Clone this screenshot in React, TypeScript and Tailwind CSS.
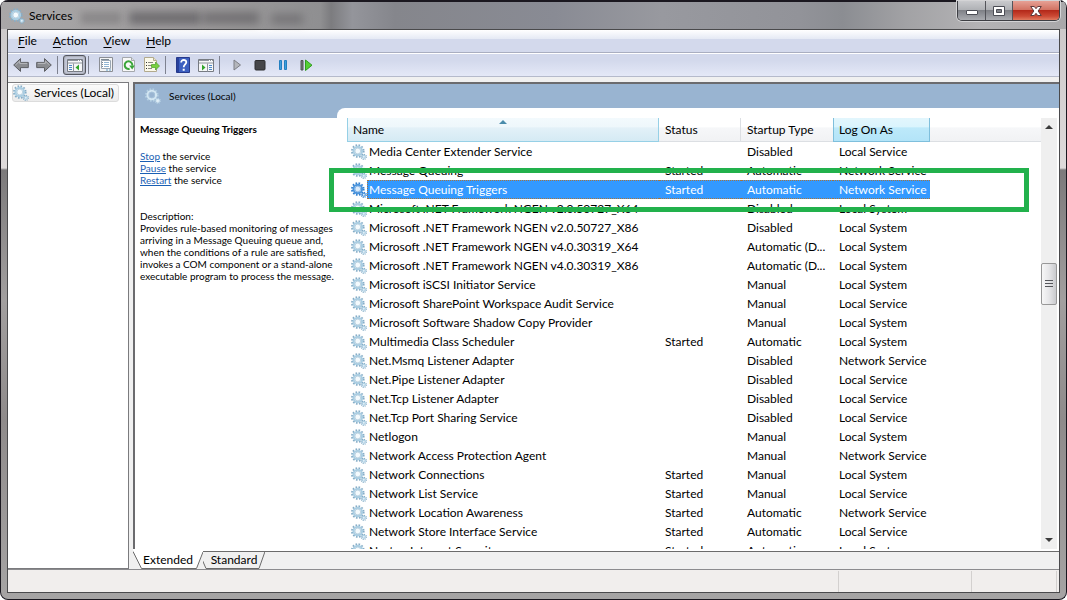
import type { ReactNode } from "react";

type Service = {
  name: string;
  status?: string;
  startup: string;
  logOn: string;
};

const services: Service[] = [
  { name: "Media Center Extender Service", startup: "Disabled", logOn: "Local Service" },
  { name: "Message Queuing", status: "Started", startup: "Automatic", logOn: "Network Service" },
  { name: "Message Queuing Triggers", status: "Started", startup: "Automatic", logOn: "Network Service" },
  { name: "Microsoft .NET Framework NGEN v2.0.50727_X64", startup: "Disabled", logOn: "Local System" },
  { name: "Microsoft .NET Framework NGEN v2.0.50727_X86", startup: "Disabled", logOn: "Local System" },
  { name: "Microsoft .NET Framework NGEN v4.0.30319_X64", startup: "Automatic (D...", logOn: "Local System" },
  { name: "Microsoft .NET Framework NGEN v4.0.30319_X86", startup: "Automatic (D...", logOn: "Local System" },
  { name: "Microsoft iSCSI Initiator Service", startup: "Manual", logOn: "Local System" },
  { name: "Microsoft SharePoint Workspace Audit Service", startup: "Manual", logOn: "Local Service" },
  { name: "Microsoft Software Shadow Copy Provider", startup: "Manual", logOn: "Local System" },
  { name: "Multimedia Class Scheduler", status: "Started", startup: "Automatic", logOn: "Local System" },
  { name: "Net.Msmq Listener Adapter", startup: "Disabled", logOn: "Network Service" },
  { name: "Net.Pipe Listener Adapter", startup: "Disabled", logOn: "Local Service" },
  { name: "Net.Tcp Listener Adapter", startup: "Disabled", logOn: "Local Service" },
  { name: "Net.Tcp Port Sharing Service", startup: "Disabled", logOn: "Local Service" },
  { name: "Netlogon", startup: "Manual", logOn: "Local System" },
  { name: "Network Access Protection Agent", startup: "Manual", logOn: "Network Service" },
  { name: "Network Connections", status: "Started", startup: "Manual", logOn: "Local System" },
  { name: "Network List Service", status: "Started", startup: "Manual", logOn: "Local Service" },
  { name: "Network Location Awareness", status: "Started", startup: "Automatic", logOn: "Network Service" },
  { name: "Network Store Interface Service", status: "Started", startup: "Automatic", logOn: "Local Service" },
  { name: "Norton Internet Security", status: "Started", startup: "Automatic", logOn: "Local System" }
];

const selectedName = "Message Queuing Triggers";

const menus = ["File", "Action", "View", "Help"];

function GearIcon({ active = false, pale = false }: { active?: boolean; pale?: boolean }) {
  const ring = active ? "#4a94dc" : pale ? "#d3e6f2" : "#a9cde2";
  const edge = active ? "#2f7fd0" : pale ? "#b5d0e3" : "#86adc7";
  return (
    <svg viewBox="0 0 16 16" className="h-4 w-4 shrink-0" aria-hidden="true">
      <circle cx="6.8" cy="7" r="5.8" fill="none" stroke={edge} strokeWidth="2" strokeDasharray="1.6 1.44" />
      <circle cx="6.8" cy="7" r="4.3" fill={pale ? "none" : "#f4fafd"} stroke={ring} strokeWidth="2" />
      <circle cx="6.8" cy="7" r="2.9" fill={active ? "#dcecfb" : "none"} stroke={edge} strokeWidth="0.5" />
      <circle cx="12.8" cy="12.8" r="2.5" fill="none" stroke={edge} strokeWidth="1.3" strokeDasharray="1 0.96" />
      <circle cx="12.8" cy="12.8" r="1.5" fill="#e4f0f7" stroke={ring} strokeWidth="1.1" />
    </svg>
  );
}

function ToolButton({ label, pressed = false, children }: { label: string; pressed?: boolean; children: ReactNode }) {
  return (
    <button
      type="button"
      aria-label={label}
      className={
        pressed
          ? "flex h-5 w-[23px] items-center justify-center rounded-[3px] border border-[#54565f] bg-[#c3c8d8] shadow-[inset_0_0_2px_#777]"
          : "flex h-5 w-[23px] items-center justify-center"
      }
    >
      <svg viewBox="0 0 16 16" className="h-4 w-4 shrink-0">
        {children}
      </svg>
    </button>
  );
}

function Separator() {
  return (
    <div className="w-2 pl-0.5">
      <div className="h-[18px] w-px bg-[#7e8290]" />
    </div>
  );
}

function TitleBar() {
  return (
    <header className="relative flex h-[29px] shrink-0 items-center border-t-2 border-[#1b1820] bg-[linear-gradient(90deg,#a9a7a8_0%,#9c9a9b_20%,#8f8f91_30%,#7c7c7f_31%,#94959b_33%,#85868c_37%,#898b94_52%,#98999f_62%,#929399_75%,#8b8d92_79%,#a2a2a5_85%,#b4b3b5_92%,#a9a8aa_100%)] pl-2">
      <div className="absolute top-2.5 left-20 h-3 w-10 bg-[#69676a]/40 blur-[3px]" />
      <div className="absolute top-2.5 left-32 h-3 w-18 bg-[#4d4b50]/60 blur-[4px]" />
      <div className="absolute top-2.5 left-[202px] h-3 w-14 bg-[#4d4b50]/50 blur-[4px]" />
      <div className="absolute top-3 left-[270px] h-2.5 w-8 bg-[#5a585c]/50 blur-[4px]" />
      <GearIcon />
      <h1 className="relative ml-1 text-xs leading-4">Services</h1>
      <div className="absolute -top-px right-1.5 flex h-5 overflow-hidden rounded-b-[5px] border border-t-0 border-[#3d3e43] shadow-[0_0_0_1px_#d4d4d6]">
        <button type="button" aria-label="Minimize" className="flex w-7 items-center justify-center border-r border-[#53545a] bg-[linear-gradient(#c9cacd_0%,#aeb0b4_48%,#7f8187_50%,#a9abb0_100%)]">
          <svg viewBox="0 0 14 12" className="h-3 w-3.5">
            <rect x="1.5" y="5.5" width="11" height="4" rx="0.5" fill="#fff" stroke="#4b4d55" />
          </svg>
        </button>
        <button type="button" aria-label="Maximize" className="flex w-[27px] items-center justify-center border-r border-[#53545a] bg-[linear-gradient(#c9cacd_0%,#aeb0b4_48%,#7f8187_50%,#a9abb0_100%)]">
          <svg viewBox="0 0 14 12" className="h-3 w-3.5">
            <path d="M1.5 1.5h11v9h-11zM4.500 4.500v3h5v-3z" fill="#fff" fillRule="evenodd" stroke="#4b4d55" />
          </svg>
        </button>
        <button type="button" aria-label="Close" className="flex w-[46px] items-center justify-center bg-[linear-gradient(#e6a195_0%,#d27363_46%,#b4291a_50%,#cc4a35_80%,#e07a5f_100%)]">
          <svg viewBox="0 0 14 12" className="h-3 w-3.5">
            <path d="M1.7 1.5h3.6L7 3.7l1.7-2.2h3.6L9.1 6l3.2 4.5H8.7L7 8.3l-1.7 2.2H1.7L4.9 6z" fill="#fff" stroke="#5d3a3c" />
          </svg>
        </button>
      </div>
    </header>
  );
}

function MenuBar() {
  return (
    <nav className="flex h-[23px] shrink-0 items-center border-b border-[#a9aec0] bg-[linear-gradient(#ffffff_0%,#e6eaf5_39%,#d3d9ec_40%,#d3d9ec_100%)] pl-0.5">
      {menus.map((menu) => (
        <button key={menu} type="button" className="px-2 text-xs leading-4">
          <span className="underline underline-offset-2">{menu[0]}</span>
          {menu.slice(1)}
        </button>
      ))}
    </nav>
  );
}

function Toolbar() {
  return (
    <div className="flex h-6 shrink-0 items-center border-t border-b border-t-white border-b-[#b5bacb] bg-[linear-gradient(#d3d9ec_0%,#d3d9ec_30%,#e4e8f7_100%)] pl-px">
      <ToolButton label="Back">
        <path d="M.7 8 7.5 1.6v3.8h7.8v5.2H7.5v3.8z" fill="#8b8d91" stroke="#5c5e63" />
        <path d="M2.5 8 6.7 4v2.4h7.5" fill="none" stroke="#b8babf" />
      </ToolButton>
      <ToolButton label="Forward">
        <path d="M15.3 8 8.5 1.6v3.8H.7v5.2h7.8v3.8z" fill="#8b8d91" stroke="#5c5e63" />
        <path d="M1.8 6.4h7.5V4l4.2 4" fill="none" stroke="#b8babf" />
      </ToolButton>
      <Separator />
      <ToolButton label="Show/Hide Console Tree" pressed>
        <path d="M.5 2.5h15v12H.5z" fill="#f6f7f8" stroke="#777b82" />
        <path d="M1 3.5h14M1 6h14" stroke="#8f959e" />
        <path d="M11 3.5h1M13 3.5h1" stroke="#fff" />
        <path d="M6.5 6.5v8" stroke="#8f959e" />
        <path d="M2 8.5h3M2 10.5h3M2 12.5h3" stroke="#4e89c8" />
        <path d="M12 7.5v6L8.5 10.5z" fill="#32a52c" />
      </ToolButton>
      <Separator />
      <ToolButton label="Properties">
        <path d="M1.5.5h13v14h-13z" fill="#f3f4f5" stroke="#8b8e94" />
        <path d="M3.5 3.5h9v8h-9z" fill="#fff" stroke="#9aa6b3" />
        <path d="M3 2.5h8M4 5.5h1M4 7.5h1M4 9.5h1" stroke="#7d8994" />
        <path d="M6 5.5h5M6 7.5h5M6 9.5h5" stroke="#90b5d3" />
        <path d="M8 13h2M11 13h2" stroke="#5d9dcb" />
      </ToolButton>
      <ToolButton label="Refresh">
        <path d="M1.5.5h9l3 3v11h-12z" fill="#f8f8f8" stroke="#a5a8ac" />
        <path d="M10.5.5v3h3" fill="#dfe1e4" stroke="#a5a8ac" />
        <path d="M8.600 11.800A3.800 3.800 0 1 1 11.300 8.600" fill="none" stroke="#3aa53a" strokeWidth="2" />
        <path d="M8.200 8.400h5.600L11.200 12.400z" fill="#3aa53a" />
      </ToolButton>
      <ToolButton label="Export List">
        <path d="M.5.5h9l3 3v11H.5z" fill="#fbf9ea" stroke="#b2aa8d" />
        <path d="M9.5.5v3h3" fill="#e9e5cd" stroke="#b2aa8d" />
        <path d="M2 5.5h1M2 8.5h1M2 11.5h1" stroke="#333" />
        <path d="M4 5.5h5M4 8.5h4M4 11.5h4" stroke="#8b8a80" />
        <path d="M7.5 7.5h4V5l4 4-4 4v-2.5h-4z" fill="#79d03f" stroke="#4aa02a" strokeWidth="0.7" />
      </ToolButton>
      <Separator />
      <ToolButton label="Help">
        <path d="M1.5.5h13v15h-13z" fill="#3c5fc0" stroke="#26398b" />
        <path d="M2 1h2v14H2z" fill="#27419c" />
        <path d="M6.2 5.5C6 2.2 11.4 2.2 11.3 5.3c0 2-2.6 2.2-2.6 4.9" fill="none" stroke="#fff" strokeWidth="1.8" />
        <path d="M7.7 11.7h2v2h-2z" fill="#fff" />
      </ToolButton>
      <ToolButton label="Show/Hide Action Pane">
        <path d="M.5 2.5h15v12H.5z" fill="#f6f7f8" stroke="#777b82" />
        <path d="M1 3.5h14M1 6h14" stroke="#8f959e" />
        <path d="M11 3.5h1M13 3.5h1" stroke="#fff" />
        <path d="M9.5 6.5v8" stroke="#8f959e" />
        <path d="M11 8.5h3M11 10.5h3M11 12.5h3" stroke="#4e89c8" />
        <path d="M4 7.5v6l3.5-3z" fill="#32a52c" />
      </ToolButton>
      <Separator />
      <ToolButton label="Start Service">
        <path d="M5 3v10l6.500-5z" fill="#b4b6bb" stroke="#7d7f86" />
      </ToolButton>
      <ToolButton label="Stop Service">
        <rect x="3" y="3.5" width="10" height="9.5" rx="1" fill="#46474a" stroke="#2d2e30" />
      </ToolButton>
      <ToolButton label="Pause Service">
        <path d="M4.500 3.500h2v9h-2zM9.500 3.500h2v9h-2z" fill="#3c9fdc" stroke="#237fc0" />
      </ToolButton>
      <ToolButton label="Restart Service">
        <path d="M3 3.5h2v9.5H3z" fill="#77797d" stroke="#505256" />
        <path d="M7.5 3v10.500L14 8.200z" fill="#55cf35" stroke="#2f9b20" />
      </ToolButton>
    </div>
  );
}

function DetailPane() {
  return (
    <section className="w-[202px] shrink-0 pt-[5px] pl-[5px] text-[10px] leading-3 whitespace-nowrap">
      <h2 className="font-bold">{selectedName}</h2>
      <ul className="mt-[15px]">
        {["Stop", "Pause", "Restart"].map((action) => (
          <li key={action}>
            <a href="#" className="text-[#1a5fb4] underline">
              {action}
            </a>{" "}
            the service
          </li>
        ))}
      </ul>
      <p className="mt-6">
        Description:
        <br />
        Provides rule-based monitoring of messages
        <br />
        arriving in a Message Queuing queue and,
        <br />
        when the conditions of a rule are satisfied,
        <br />
        invokes a COM component or a stand-alone
        <br />
        executable program to process the message.
      </p>
    </section>
  );
}

function ServiceRow({ service }: { service: Service }) {
  const selected = service.name === selectedName;
  const cell = selected
    ? "border-y border-dotted border-[#a8743c] bg-[#3399ff] p-0 pl-1.5 text-white"
    : "p-0 pl-1.5";
  return (
    <tr className="h-[19px]" aria-selected={selected}>
      <td className="p-0">
        <div className="flex h-[19px] items-center pl-1">
          <GearIcon active={selected} />
          <span
            className={
              selected
                ? "flex h-[19px] flex-1 items-center border-y border-l border-dotted border-[#a8743c] bg-[#3399ff] pl-px text-white"
                : "pl-0.5"
            }
          >
            {service.name}
          </span>
        </div>
      </td>
      <td className={cell}>{service.status}</td>
      <td className={cell}>{service.startup}</td>
      <td className={cell}>{service.logOn}</td>
      <td className="p-0" />
    </tr>
  );
}

function ServiceTable() {
  return (
    <div className="min-w-0 flex-1 overflow-hidden">
      <table className="w-full table-fixed border-separate border-spacing-0 text-left text-xs leading-4 whitespace-nowrap">
        <colgroup>
          <col className="w-[312px]" />
          <col className="w-[82px]" />
          <col className="w-[92px]" />
          <col className="w-[97px]" />
          <col />
        </colgroup>
        <thead>
          <tr className="h-6">
            <th className="relative border border-t-0 border-[#96d0e6] bg-[linear-gradient(#f3fafd_0%,#eef7fb_40%,#e3f1f8_42%,#d5eaf4_100%)] p-0 pl-[5px] font-normal">
              <svg viewBox="0 0 8 4" className="absolute top-0.5 left-1/2 -ml-1 h-1 w-2">
                <path d="M0 4 4 0l4 4z" fill="#4a8cab" />
              </svg>
              Name
            </th>
            <th className="border-r border-b border-[#dcdfe3] bg-[linear-gradient(#ffffff_0%,#ffffff_40%,#f6f7f9_42%,#f1f2f4_100%)] p-0 pl-1.5 font-normal">Status</th>
            <th className="border-b border-[#dcdfe3] bg-[linear-gradient(#ffffff_0%,#ffffff_40%,#f6f7f9_42%,#f1f2f4_100%)] p-0 pl-1.5 font-normal">Startup Type</th>
            <th className="border border-t-0 border-[#7fbfdc] bg-[linear-gradient(#e2f6fd_0%,#daf4fd_40%,#bde9fa_42%,#b3e4f8_100%)] p-0 pl-[5px] font-normal">Log On As</th>
            <th className="border-b border-[#dcdfe3] bg-[linear-gradient(#ffffff_0%,#ffffff_40%,#f6f7f9_42%,#f1f2f4_100%)] p-0" />
          </tr>
        </thead>
        <tbody>
          {services.map((service) => (
            <ServiceRow key={service.name} service={service} />
          ))}
        </tbody>
      </table>
    </div>
  );
}

function ScrollBar() {
  return (
    <div className="flex w-4 shrink-0 flex-col bg-[#efefef]">
      <button type="button" aria-label="Scroll up" className="flex h-[18px] items-center justify-center">
        <svg viewBox="0 0 8 4" className="h-1 w-2">
          <path d="M0 4 4 0l4 4z" fill="#3c3c3c" />
        </svg>
      </button>
      <div className="grow-[127]" />
      <div className="flex h-[42px] flex-col items-center justify-center gap-0.5 rounded-[2px] border border-[#989898] bg-[linear-gradient(90deg,#f7f7f7_0%,#e6e6e8_50%,#c9cacd_100%)]">
        <div className="h-px w-2 bg-[#55565a]" />
        <div className="h-px w-2 bg-[#55565a]" />
        <div className="h-px w-2 bg-[#55565a]" />
      </div>
      <div className="grow-[227]" />
      <button type="button" aria-label="Scroll down" className="flex h-[18px] items-center justify-center">
        <svg viewBox="0 0 8 4" className="h-1 w-2">
          <path d="M0 0h8L4 4z" fill="#3c3c3c" />
        </svg>
      </button>
    </div>
  );
}

function ViewTabs() {
  return (
    <div className="flex h-5 shrink-0 bg-[#f0f0f0] text-xs leading-4">
      <button type="button" className="relative h-5 w-[70px] pt-0.5">
        <svg viewBox="0 0 70 20" className="absolute inset-0 h-5 w-[70px]">
          <path d="M0 0h70v2.5L63.500 19.500h-55L0 1z" fill="#fff" />
          <path d="M0 2.500 8.500 19.500h55L70 3" fill="none" stroke="#6b6b6b" />
        </svg>
        <span className="relative">Extended</span>
      </button>
      <button type="button" className="relative h-5 w-[62px] pt-0.5">
        <svg viewBox="0 0 62 20" className="absolute inset-0 h-5 w-[62px]">
          <path d="M0 0h62v2H0z" fill="#fff" />
          <path d="M-2 8 3 19.500h53L62 2.500" fill="none" stroke="#6b6b6b" />
          <path d="M0 2.500h62" stroke="#6b6b6b" />
        </svg>
        <span className="relative">Standard</span>
      </button>
      <div className="h-[3px] flex-1 border-b border-[#6b6b6b] bg-white" />
    </div>
  );
}

export default function App() {
  return (
    <div className="flex h-screen flex-col overflow-hidden rounded-lg border-r border-b border-l border-[#1b1820] bg-[linear-gradient(#c9c6c7_0px,#dedada_168px,#7c7a7b_170px,#a29f9f_300px,#8f8b8b_420px,#a6a4a4_100%)] font-[Lato,'Open_Sans',sans-serif] text-black">
      <TitleBar />
      <div className="mx-1.5 mb-1.5 flex min-h-0 flex-1 flex-col border border-[#4a4a4c] bg-[#f0f0f0]">
        <MenuBar />
        <Toolbar />
        <main className="flex min-h-0 flex-1 gap-1 pt-[5px]">
          <aside className="w-[121px] shrink-0 border border-l-0 border-[#7b7b7e] bg-white pt-px pl-1">
            <a href="#" className="flex h-[18px] w-[107px] items-center gap-[5px] rounded-[3px] border border-[#dcdcdc] bg-[linear-gradient(#fafafa,#ececec)] text-xs whitespace-nowrap">
              <GearIcon />
              Services (Local)
            </a>
          </aside>
          <div className="flex min-w-0 flex-1 flex-col">
            <div className="relative flex min-h-0 flex-1 flex-col border-t-2 border-l-2 border-[#6b6b6e] bg-white">
              <div className="flex h-[34px] shrink-0 items-center gap-2 bg-[#99b4d1] pb-2.5 pl-2.5 text-[10px]">
                <GearIcon pale />
                Services (Local)
              </div>
              <div className="flex min-h-0 flex-1">
                <DetailPane />
                <div className="relative -mt-2.5 flex min-w-0 flex-1 rounded-tl-lg bg-white pt-2.5 pr-0.5 pl-2.5">
                  <ServiceTable />
                  <ScrollBar />
                  <div className="pointer-events-none absolute top-[60px] right-[30px] -left-2 h-11 border-[5px] border-[#22b14c]" />
                </div>
              </div>
            </div>
            <ViewTabs />
          </div>
        </main>
        <footer className="flex h-[23px] shrink-0 border-t border-[#8b8b8e] bg-[#f1eeed] pt-px pr-0.5">
          <div className="flex-1" />
          <div className="w-[133px] border-l border-[#d3d0cf]" />
          <div className="w-[86px] border-x border-[#d3d0cf]" />
        </footer>
      </div>
    </div>
  );
}
